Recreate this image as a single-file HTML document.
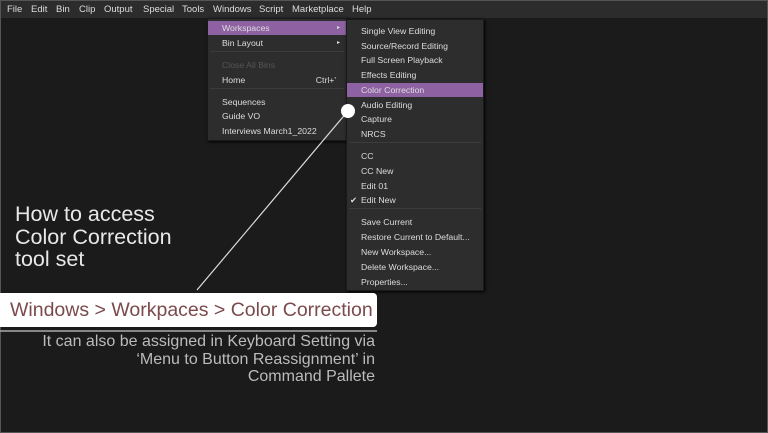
<!DOCTYPE html><html><head><style>
body{margin:0;width:768px;height:433px;background:#1b1b1b;position:relative;overflow:hidden;font-family:"Liberation Sans",sans-serif}
.frame{position:absolute;left:0;top:0;width:766px;height:431px;border:1px solid #555}
.bar{position:absolute;left:1px;top:1px;width:766px;height:17px;background:#2c2c2c;font-size:9.5px;color:#ddd}
.bar span{position:absolute;top:3px}
.menu{position:absolute;background:#2d2d2d;border:1px solid #1a1a1a;box-shadow:1px 1px 3px #000;font-size:8.7px;color:#ddd}
.it{position:absolute;left:0;right:0;height:14px;line-height:14px;padding-left:14px}
.hl{background:#8e62a2}
.sep{position:absolute;left:2px;right:2px;height:1px;background:#3c3c3c}
.t{position:absolute;color:#eee;font-weight:300}
</style></head><body>
<div class="frame"></div>
<div class="bar">
<span style="left:6px">File</span><span style="left:30px">Edit</span><span style="left:55px">Bin</span><span style="left:78px">Clip</span><span style="left:103px">Output</span><span style="left:142px">Special</span><span style="left:181px">Tools</span><span style="left:212px">Windows</span><span style="left:258px">Script</span><span style="left:291px">Marketplace</span><span style="left:351px">Help</span>
</div>
<div class="menu" style="left:207px;top:18px;width:138px;height:121px">
<div class="it hl" style="top:2px">Workspaces<span style="position:absolute;right:6px;font-size:6px">▸</span></div>
<div class="it" style="top:17px">Bin Layout<span style="position:absolute;right:6px;font-size:6px">▸</span></div>
<div class="sep" style="top:32px"></div>
<div class="it" style="top:39px;color:#555">Close All Bins</div>
<div class="it" style="top:54px">Home<span style="position:absolute;right:10px">Ctrl+'</span></div>
<div class="sep" style="top:69px"></div>
<div class="it" style="top:76px">Sequences</div>
<div class="it" style="top:90px">Guide VO</div>
<div class="it" style="top:105px">Interviews March1_2022</div>
</div>
<div class="menu" style="left:346px;top:19px;width:136px;height:270px">
<div class="it" style="top:4px">Single View Editing</div>
<div class="it" style="top:19px">Source/Record Editing</div>
<div class="it" style="top:33px">Full Screen Playback</div>
<div class="it" style="top:48px">Effects Editing</div>
<div class="it hl" style="top:63px">Color Correction</div>
<div class="it" style="top:78px">Audio Editing</div>
<div class="it" style="top:92px">Capture</div>
<div class="it" style="top:107px">NRCS</div>
<div class="sep" style="top:122px"></div>
<div class="it" style="top:129px">CC</div>
<div class="it" style="top:144px">CC New</div>
<div class="it" style="top:159px">Edit 01</div>
<div class="it" style="top:173px"><span style="position:absolute;left:3px">✔</span>Edit New</div>
<div class="sep" style="top:188px"></div>
<div class="it" style="top:195px">Save Current</div>
<div class="it" style="top:210px">Restore Current to Default...</div>
<div class="it" style="top:225px">New Workspace...</div>
<div class="it" style="top:240px">Delete Workspace...</div>
<div class="it" style="top:255px">Properties...</div>
</div>
<svg style="position:absolute;left:0;top:0" width="768" height="433"><line x1="348" y1="111" x2="197" y2="290" stroke="#ddd" stroke-width="1.2"/><circle cx="348" cy="111" r="7" fill="#fff"/><line x1="0" y1="331" x2="377" y2="331" stroke="#aaa" stroke-width="1.5"/></svg>
<div class="t" style="left:15px;top:203px;font-size:21.5px;line-height:22.5px;color:#e8e8e8">How to access<br>Color Correction<br>tool set</div>
<div style="position:absolute;left:0;top:293px;width:377px;height:34px;background:#fff;border-radius:0 4px 4px 0;color:#7b4a4c;font-size:19.5px;line-height:34px;text-indent:10px;white-space:nowrap;overflow:hidden">Windows &gt; Workpaces &gt; Color Correction</div>
<div class="t" style="right:393px;top:333px;font-size:16px;line-height:17.5px;text-align:right;color:#bbb;white-space:nowrap">It can also be assigned in Keyboard Setting via<br>‘Menu to Button Reassignment’ in<br>Command Pallete</div>
</body></html>
